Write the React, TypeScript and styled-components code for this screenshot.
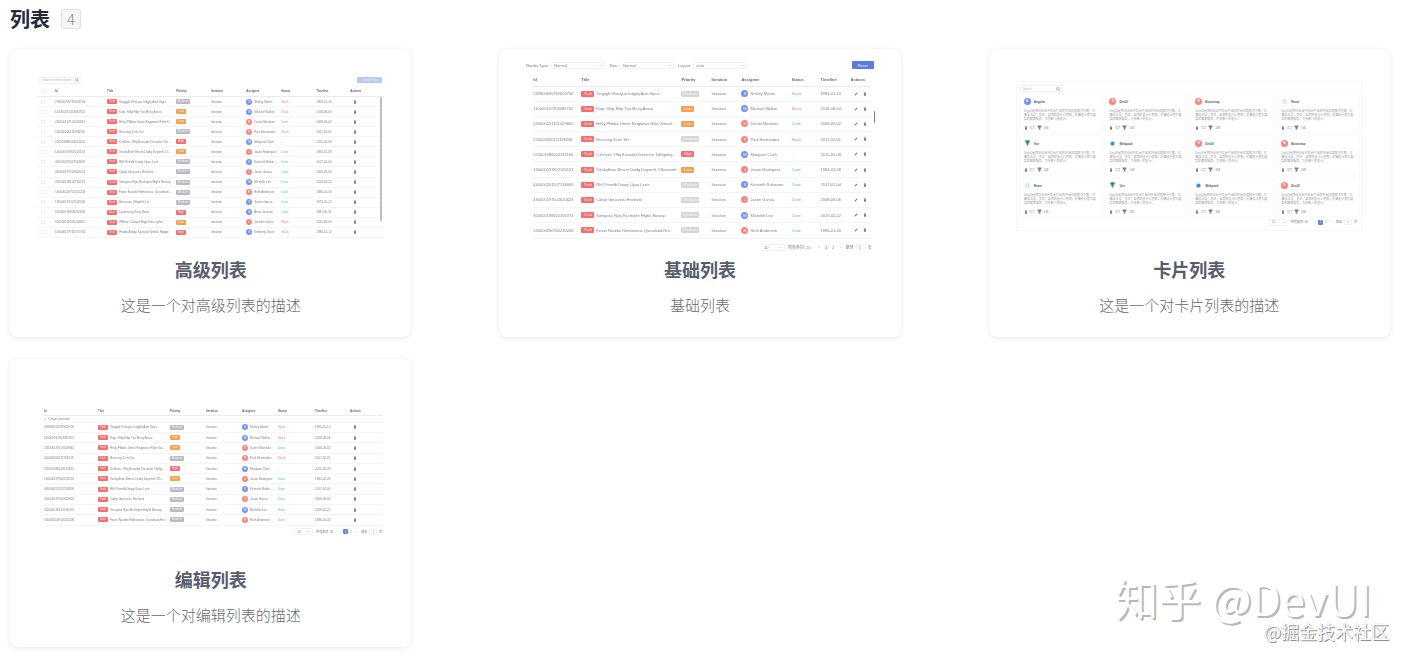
import React from 'react';
import styled, { createGlobalStyle, css } from 'styled-components';

const GlobalStyle = createGlobalStyle`
  * { box-sizing: border-box; }
  body {
    margin: 0;
    background: #fff;
    color: #252b3a;
    font-family: "Liberation Sans", "Noto Sans CJK SC", sans-serif;
  }
`;

const Page = styled.main`
  position: relative;
  padding: 7px 18px 14px 10px;
`;

const Header = styled.header`
  display: flex;
  align-items: center;
  gap: 11px;
  height: 24px;
  margin-bottom: 18px;
`;

const Heading = styled.h1`
  margin: 0;
  font: 700 20px/24px "Noto Sans CJK SC", sans-serif;
`;

const Count = styled.span`
  width: 20px;
  height: 20px;
  border: 1px solid #dfe1e6;
  border-radius: 2px;
  background: #f5f5f6;
  color: #8a8e99;
  font: 300 15px/18px "Noto Sans CJK SC", sans-serif;
  text-align: center;
`;

const Grid = styled.section`
  display: grid;
  grid-template-columns: repeat(3, minmax(0, 1fr));
  gap: 22px 88px;
`;

const Card = styled.article`
  display: flex;
  flex-direction: column;
  align-items: center;
  height: 288px;
  padding: 5px 27px 0;
  border-radius: 8px;
  background: #fff;
  box-shadow: 0 1px 5px rgba(37, 43, 58, 0.11);
`;

const Frame = styled.div`
  display: flex;
  align-items: center;
  width: 100%;
  height: 200px;
  padding-top: 4px;
`;

const CardTitle = styled.h2`
  margin: 3px 0 0;
  color: #575d6c;
  font: 700 18px/24px "Noto Sans CJK SC", sans-serif;
`;

const CardText = styled.p`
  margin: 13px 0 0;
  color: #666a72;
  font: 300 15px/22px "Noto Sans CJK SC", sans-serif;
`;

/* ---- previews ---- */

type Size = { $large?: boolean };

const Preview = styled.div<Size & { $low?: boolean }>`
  width: 100%;
  padding-top: ${p => (p.$low ? 12 : 0)}px;
  opacity: 0.88;
  color: #6c6f78;
  font: ${p => (p.$large ? '4px/5px' : '3px/4px')} "Liberation Sans Narrow", "Liberation Sans", "Noto Sans CJK SC", sans-serif;
`;

const Bar = styled.div<{ $end?: boolean; $large?: boolean }>`
  display: flex;
  align-items: center;
  gap: 3px;
  justify-content: ${p => (p.$end ? 'flex-end' : 'space-between')};
  height: ${p => (p.$large ? 17 : 12)}px;
  padding-left: ${p => (p.$large ? 0 : 2)}px;
  padding-right: ${p => (p.$large && !p.$end ? 0 : 2)}px;
`;

const Filters = styled.div`
  display: flex;
  align-items: center;
  gap: 4px;
`;

const Field = styled.label`
  display: flex;
  align-items: center;
  gap: 2px;
  white-space: nowrap;
`;

const controlText = css`
  border: 0;
  margin: 0;
  padding: 0;
  background: none;
  color: inherit;
  font: inherit;
  min-width: 0;
  outline: 0;
`;

const Box = styled.span<{ $w: number; $h?: number }>`
  display: flex;
  align-items: center;
  justify-content: space-between;
  width: ${p => p.$w}px;
  height: ${p => p.$h ?? 7}px;
  padding: 0 2px;
  border: 1px solid #eff0f3;
  border-radius: 1px;
`;

const Select = styled.select`
  ${controlText}
  appearance: none;
  flex: 1;
`;

const Input = styled.input`
  ${controlText}
  flex: 1;
  width: 100%;
  &::placeholder { color: #a5a8b0; }
`;

const Action = styled.button<{ $pale?: boolean; $large?: boolean }>`
  width: ${p => (p.$large ? 22 : 25)}px;
  height: ${p => (p.$large ? 8 : 6)}px;
  padding: 0;
  border: 0;
  border-radius: 1px;
  background: ${p => (p.$pale ? '#b4c0f5' : '#4668dd')};
  color: #e6ebff;
  font: inherit;
`;

const TableWrap = styled.div<{ $left: number; $right: number }>`
  position: relative;
  padding: 0 ${p => p.$right}px 0 ${p => p.$left}px;
`;

const Table = styled.table<{ $h: number; $head: number }>`
  width: 100%;
  height: ${p => p.$h}px;
  table-layout: fixed;
  border-collapse: separate;
  border-spacing: 0;
  th, td {
    padding: 0;
    border-bottom: 1px solid #f4f4f6;
    text-align: left;
    vertical-align: middle;
    white-space: nowrap;
    overflow: hidden;
  }
  th {
    height: ${p => p.$head}px;
    border-color: #e9e9ec;
    color: #50535c;
    font-weight: 700;
  }
`;

const Col = styled.col<{ $w: number }>`
  width: ${p => p.$w}px;
`;

const Cell = styled.div`
  display: flex;
  align-items: center;
  gap: 2px;
`;

const Ellipsis = styled.span`
  overflow: hidden;
  text-overflow: ellipsis;
  padding-right: 4px;
`;

const Tag = styled.span<{ $c: string; $large?: boolean; $wide?: boolean }>`
  flex: none;
  display: block;
  width: ${p => (p.$large ? (p.$wide ? 18 : 13) : p.$wide ? 14 : 10)}px;
  height: ${p => (p.$large ? 6 : 5)}px;
  border-radius: 1px;
  background: ${p => p.$c};
  color: rgba(255, 255, 255, 0.8);
  line-height: ${p => (p.$large ? 6 : 5)}px;
  text-align: center;
`;

const Avatar = styled.span<{ $c: string; $large?: boolean }>`
  flex: none;
  width: ${p => (p.$large ? 7 : 6)}px;
  height: ${p => (p.$large ? 7 : 6)}px;
  border-radius: 50%;
  background: ${p => p.$c};
  color: #fff;
  line-height: ${p => (p.$large ? 7 : 6)}px;
  text-align: center;
`;

const Status = styled.span<{ $s: string }>`
  color: ${p => (p.$s === 'Stuck' ? '#f0626a' : p.$s === 'Done' ? '#3fc598' : '#999')};
`;

const Check = styled.input`
  appearance: none;
  display: block;
  width: 4px;
  height: 4px;
  margin: 0 0 0 4px;
  border: 1px solid #f0f0f2;
`;

const Scroll = styled.span<{ $blue?: boolean }>`
  position: absolute;
  right: ${p => (p.$blue ? -1 : 2)}px;
  top: ${p => (p.$blue ? 37 : 11)}px;
  width: ${p => (p.$blue ? 1 : 2)}px;
  height: ${p => (p.$blue ? 12 : 124)}px;
  border-radius: 1px;
  background: ${p => (p.$blue ? '#5068c8' : '#b4b5b9')};
`;

const Actions = styled.span<Size>`
  display: flex;
  gap: 5px;
  padding-left: 3px;
`;

const PageNo = styled.button<{ $tone?: 'solid' | 'line' }>`
  min-width: 5px;
  height: 5px;
  padding: 0;
  border: 0;
  border-radius: 1px;
  background: ${p => (p.$tone === 'solid' ? '#5070dc' : p.$tone === 'line' ? '#f0f1f4' : 'none')};
  color: ${p => (p.$tone === 'solid' ? '#fff' : '#777')};
  font: inherit;
`;

const Pages = styled.nav<Size>`
  display: flex;
  align-items: center;
  gap: ${p => (p.$large ? 2 : 0)}px;
  margin-left: ${p => (p.$large ? 3 : 2)}px;
`;

const Chevron = () => (
  <svg width="3" height="3" viewBox="0 0 6 6" fill="none" stroke="#8a8e99"><path d="M1 2l2 2 2-2" /></svg>
);

const Magnifier = () => (
  <svg width="4" height="4" viewBox="0 0 8 8" fill="none" stroke="#777" strokeWidth="1.2"><circle cx="3.5" cy="3.5" r="2.6" /><path d="M5.5 5.5L7.6 7.6" /></svg>
);

const Bin = () => (
  <svg width="4" height="4" viewBox="0 0 8 8" fill="#5c5f67"><path d="M3 .5h2v1h1.500v1H1.500v-1H3zM2 3h4l-.3 4.500H2.300z" /></svg>
);

const Pencil = () => (
  <svg width="4" height="4" viewBox="0 0 8 8" fill="#5c5f67"><path d="M1 7l.6-2.2L5.500 1.200 6.800 2.500 3.200 6.400z" /></svg>
);

const Dropdown = ({ label, value, w }: { label: string; value: string; w: number }) => (
  <Box $w={w}>
    <Select aria-label={label} defaultValue={value}><option>{value}</option></Select>
    <Chevron />
  </Box>
);

const Pager = ({ large, total, last }: { large?: boolean; total: number; last?: number }) => (
  <>
    <Dropdown label="每页条数" value="10" w={large ? 24 : 19} />
    <span>所有条目: {total}</span>
    <Pages $large={large} aria-label="分页">
      <PageNo>‹</PageNo>
      <PageNo $tone={large ? 'line' : 'solid'}>1</PageNo>
      <PageNo>{last ?? 2}</PageNo>
      <PageNo>›</PageNo>
    </Pages>
    <Field>
      跳至
      <Box $w={large ? 10 : 8} $h={6}><Input aria-label="页码" defaultValue="1" /></Box>
      页
    </Field>
  </>
);

type Item = [id: string, title: string, priority: string, name: string, status: string, date: string, blue: boolean];

const items: Item[] = [
  ['239800205782603706', 'Torgqijb Vimuyuo Icdjgbj Aozt Sipcv', 'Medium', 'Shirley Martin', 'Stuck', '1983-01-10', true],
  ['110000197203085702', 'Kvqc Xfdg Rfqr Txo Mccg Arsea', 'Low', 'Michael Walker', 'Stuck', '2018-08-04', true],
  ['230000197101029862', 'Hrkly Pfddxx Umne Rzqptnwx Rvlei Kwncfi ...', 'Low', 'Daniel Martinez', 'Done', '2008-09-02', false],
  ['520000200111198248', 'Rnscnsg Xcmi Tex', 'Medium', 'Paul Hernandez', 'Stuck', '2017-02-01', false],
  ['220001986024131160', 'Cxhhvec Yfltq Eusudpr Dosxnhn Tzbhgnkg...', 'High', 'Margaret Clark', '-', '2015-05-08', true],
  ['140000197802120153', 'Vwskyfhwe Bmcm Dxidq Dxynmfc Cfhwxcmfr', 'Low', 'Jason Rodriguez', 'Done', '1984-02-08', false],
  ['440000201507134809', 'Rbf Yhmxfb Dwog Llyao Lsztr', 'Medium', 'Kenneth Robinson', 'Done', '2017-02-04', true],
  ['430000197502620624', 'Cdxqr Gpucvrou Hnslevtz', 'Medium', 'Jason Garcia', 'Done', '2008-09-06', false],
  ['350000198102156374', 'Sxmgosx Ryiu Rccfniptn Htghz Bxvocp', 'Medium', 'Michelle Lee', 'Done', '2019-02-22', true],
  ['530000200702210208', 'Fwzie Nvszbe Rdmumouc Qucodvod Rcn', 'Medium', 'Ruth Anderson', 'Done', '1986-01-30', false],
  ['130000197507202136', 'Bxvocxxo Dfhyifmk Lsi', 'Medium', 'Susan Garcia', 'Done', '1973-01-12', true],
  ['650000198908072808', 'Lxwhmcng Kxvq Bqxq', 'High', 'Anna Jackson', 'Done', '1997-05-31', true],
  ['820000199205263801', 'Wfllcxe Cwkycd Rqgi Vnno Lpfnx', 'Low', 'Jennifer Davis', 'Stuck', '2015-03-09', false],
  ['150000197719271756', 'Hxqdo Axhqp Kqxixxd Vpmfxk Rgqqe', 'High', 'Kimberly Davis', 'Stuck', '1998-12-12', true],
];

const priorityColor: Record<string, string> = { Medium: '#afb2ba', Low: '#f5953a', High: '#f05d63' };
const headings = ['Id', 'Title', 'Priority', 'Iteration', 'Assignee', 'Status', 'Timeline', 'Actions'];

type ListProps = { rows: Item[]; cols: number[]; height: number; head: number; large?: boolean; checks?: boolean; create?: boolean };

const ListTable = ({ rows, cols, height, head, large, checks, create }: ListProps) => (
  <Table $h={height} $head={head}>
    <colgroup>{cols.map((w, i) => <Col key={i} $w={w} />)}</colgroup>
    <thead>
      <tr>
        {checks && <th><Check type="checkbox" aria-label="全选" /></th>}
        {headings.map(h => <th key={h}>{h}</th>)}
      </tr>
    </thead>
    <tbody>
      {create && <tr><td colSpan={8}>+ &nbsp; Create new item</td></tr>}
      {rows.map(([id, title, priority, name, status, date, blue]) => (
        <tr key={id}>
          {checks && <td><Check type="checkbox" aria-label={id} /></td>}
          <td>{id}</td>
          <td><Cell><Tag $c="#f55c58" $large={large}>Task</Tag><Ellipsis>{title}</Ellipsis></Cell></td>
          <td>
            <Tag $c={large && priority === 'Medium' ? '#d0d1d5' : priorityColor[priority]} $large={large} $wide={priority === 'Medium'}>{priority}</Tag>
          </td>
          <td>Iteration</td>
          <td><Cell><Avatar $c={blue ? '#6484f3' : '#fa756b'} $large={large}>{name[0]}</Avatar><Ellipsis>{name}</Ellipsis></Cell></td>
          <td><Status $s={status}>{status}</Status></td>
          <td>{date}</td>
          <td><Actions>{large && <Pencil />}<Bin /></Actions></td>
        </tr>
      ))}
    </tbody>
  </Table>
);

const AdvancedPreview = () => (
  <Preview>
    <Bar>
      <Box $w={43}><Input aria-label="搜索" placeholder="Search with the Name" /><Magnifier /></Box>
      <Action $pale>Create New</Action>
    </Bar>
    <TableWrap $left={0} $right={0}>
      <ListTable rows={items} cols={[18, 52, 69, 35, 35, 35, 35, 34, 34]} height={152} head={11} checks />
      <Scroll />
    </TableWrap>
  </Preview>
);

const BasicPreview = () => (
  <Preview $large>
    <Bar $large>
      <Filters>
        <Field>Border Type: <Dropdown label="Border Type" value="Normal" w={54} /></Field>
        <Field>Size: <Dropdown label="Size" value="Normal" w={54} /></Field>
        <Field>Layout: <Dropdown label="Layout" value="auto" w={54} /></Field>
      </Filters>
      <Action $large>Reset</Action>
    </Bar>
    <TableWrap $left={7} $right={3}>
      <ListTable rows={items.slice(0, 10)} cols={[48, 100, 30, 30, 50, 29, 30, 20]} height={165} head={13} large />
      <Scroll $blue />
    </TableWrap>
    <Bar $end $large><Pager large total={20} /></Bar>
  </Preview>
);

const EditPreview = () => (
  <Preview $low>
    <TableWrap $left={7} $right={2}>
      <ListTable rows={items.slice(0, 10)} cols={[54, 72, 36, 36, 36, 37, 35, 33]} height={119} head={9} create />
    </TableWrap>
    <Bar $end><Pager total={20} /></Bar>
  </Preview>
);

const Board = styled.div`
  height: 150px;
  padding: 3px;
  border: 1px solid #f6f6f7;
`;

const Tiles = styled.div`
  display: grid;
  grid-template-columns: repeat(4, minmax(0, 1fr));
  gap: 4px;
  margin-top: 2px;
`;

const Tile = styled.section`
  height: 38px;
  padding: 4px 4px 0;
  box-shadow: 0 0 2px rgba(37, 43, 58, 0.07);
`;

const TileHead = styled.div`
  display: flex;
  align-items: center;
  gap: 3px;
  height: 7px;
  color: #40434c;
  font-weight: 700;
`;

const TileText = styled.p`
  height: 12px;
  margin: 4px 0;
  overflow: hidden;
  color: #8d9098;
`;

const TileFoot = styled.div`
  display: flex;
  align-items: center;
  gap: 2px;
`;

const Trophy = () => (
  <svg width="5" height="5" viewBox="0 0 10 10" fill="#6c6f78"><path d="M1 1h8v2L6.5 6v2H7.500v1H2.500V8h1V6L1 3z" /></svg>
);

const Logo = ({ name }: { name: string }) => {
  if (name === 'Vue') return <svg width="7" height="7" viewBox="0 0 14 14"><path d="M1 1h12L7 13z" fill="#3fa878" /><path d="M4 1h6L7 7z" fill="#2d4a5b" /></svg>;
  if (name === 'Webpack') return <svg width="7" height="7" viewBox="0 0 14 14"><path d="M7 1l5 3v6l-5 3-5-3V4z" fill="#b5dcf3" /><path d="M7 3.500l3.500 2v3.500L7 11 3.500 9V5.500z" fill="#1f7dc4" /></svg>;
  if (name === 'React') return <svg width="7" height="7" viewBox="0 0 14 14" fill="none" stroke="#a6e4f5"><ellipse cx="7" cy="7" rx="5" ry="2" /><ellipse cx="7" cy="7" rx="5" ry="2" transform="rotate(60 7 7)" /><ellipse cx="7" cy="7" rx="5" ry="2" transform="rotate(120 7 7)" /></svg>;
  return <Avatar $large $c={name === 'Angular' ? '#6484f3' : '#fa756b'}>{name[0]}</Avatar>;
};

const tiles = ['Angular', 'DevUI', 'Bootstrap', 'React', 'Vue', 'Webpack', 'DevUI', 'Bootstrap', 'React', 'Vue', 'Webpack', 'DevUI'];

const CardsPreview = () => (
  <Preview>
    <Board>
      <Box $w={43}><Input aria-label="搜索" placeholder="Search" /><Magnifier /></Box>
      <Tiles>
        {tiles.map((name, i) => (
          <Tile key={i}>
            <TileHead><Logo name={name} />{name}</TileHead>
            <TileText>DevUI是面向企业中后台产品的开源前端解决方案，它倡导沉浸、灵活、至简的设计价值观，提倡设计者为真实的需求服务，为多数人的设计。</TileText>
            <TileFoot><Bin />ICT<Trophy />168</TileFoot>
          </Tile>
        ))}
      </Tiles>
      <Bar $end><Pager total={20} /></Bar>
    </Board>
  </Preview>
);

const cards = [
  { title: '高级列表', text: '这是一个对高级列表的描述', preview: <AdvancedPreview /> },
  { title: '基础列表', text: '基础列表', preview: <BasicPreview /> },
  { title: '卡片列表', text: '这是一个对卡片列表的描述', preview: <CardsPreview /> },
  { title: '编辑列表', text: '这是一个对编辑列表的描述', preview: <EditPreview /> },
];

const Watermark = styled.div`
  position: absolute;
  right: 19px;
  bottom: 20px;
  display: flex;
  flex-direction: column;
  align-items: flex-end;
  pointer-events: none;
`;

const WatermarkMain = styled.span`
  margin-right: 18px;
  color: #fff;
  font: 400 43px/48px "Noto Sans CJK SC", sans-serif;
  text-shadow: 2px 2px 0 #b8b8b8;
`;

const WatermarkSub = styled.span`
  color: #fff;
  font: 400 18px/20px "Noto Sans CJK SC", sans-serif;
  text-shadow: 1px 1px 0 #909090, 0 0 1px #aaa;
`;

export default function App() {
  return (
    <>
      <GlobalStyle />
      <Page>
        <Header>
          <Heading>列表</Heading>
          <Count>4</Count>
        </Header>
        <Grid>
          {cards.map(card => (
            <Card key={card.title}>
              <Frame>{card.preview}</Frame>
              <CardTitle>{card.title}</CardTitle>
              <CardText>{card.text}</CardText>
            </Card>
          ))}
        </Grid>
        <Watermark>
          <WatermarkMain>知乎 @DevUI</WatermarkMain>
          <WatermarkSub>@掘金技术社区</WatermarkSub>
        </Watermark>
      </Page>
    </>
  );
}
